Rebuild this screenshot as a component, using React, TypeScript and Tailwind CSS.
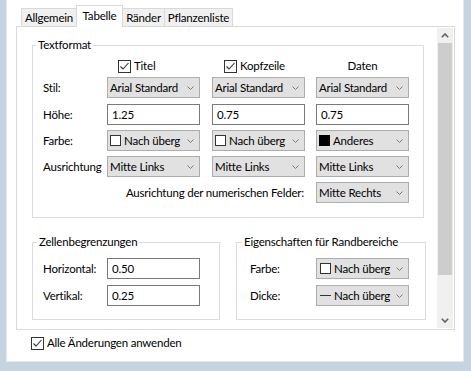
import React from "react";

function Chev() {
  return (
    <svg width="7" height="4" viewBox="0 0 7 4" className="shrink-0">
      <polyline points="0.5,0.5 3.5,3.5 6.5,0.5" fill="none" stroke="#7a7a7a" strokeWidth="1" />
    </svg>
  );
}

function Drop({ children }: { children: React.ReactNode }) {
  return (
    <div className="w-[93px] h-[21px] shrink-0 bg-[#e1e1e1] border border-[#adadad] flex items-center pl-[2px] pr-[5px]">
      <div className="flex-1 flex items-center gap-[3px] overflow-hidden whitespace-nowrap">{children}</div>
      <Chev />
    </div>
  );
}

function Field({ v }: { v: string }) {
  return (
    <div className="w-[93px] h-[21px] shrink-0 bg-white border border-[#7a7a7a] flex items-center pl-[4px]">{v}</div>
  );
}

function Swatch({ filled }: { filled?: boolean }) {
  return (
    <span
      className={
        filled
          ? "w-[11px] h-[11px] shrink-0 border border-black bg-black"
          : "w-[11px] h-[11px] shrink-0 border border-[#333333] bg-white"
      }
    />
  );
}

function Check({ label }: { label: string }) {
  return (
    <div className="flex items-center gap-[3px] h-[16px] whitespace-nowrap">
      <span className="w-[13px] h-[13px] border border-[#333333] bg-white flex items-center justify-center shrink-0">
        <svg width="11" height="11" viewBox="0 0 11 11">
          <polyline points="1.5,5.5 4,8 9.5,2" fill="none" stroke="#333333" strokeWidth="1.1" />
        </svg>
      </span>
      <span>{label}</span>
    </div>
  );
}

function ScrollArrow({ up }: { up?: boolean }) {
  return (
    <svg width="8" height="5" viewBox="0 0 8 5">
      <polyline
        points={up ? "0.8,4.2 4,1 7.2,4.2" : "0.8,0.8 4,4 7.2,0.8"}
        fill="none"
        stroke="#606060"
        strokeWidth="1.6"
      />
    </svg>
  );
}

export default function App() {
  return (
    <div className="w-[471px] h-[371px] bg-[#c6d3e1] pl-[6px] pr-[7px] pb-[9px] font-['Lato',sans-serif] text-[11.5px] tracking-[-0.2px] leading-[16px] text-black">
      <div className="h-full bg-white border-l border-r border-b border-[#e2e9f1] pl-[9px] pt-[5px]">
        {/* tabs */}
        <div className="h-[21px] flex items-end pl-[5px]">
          <div className="h-[18px] w-[55px] bg-[#f0f0f0] border-t border-l border-[#d9d9d9] flex items-center justify-center">
            Allgemein
          </div>
          <div className="relative z-10 h-[22px] w-[47px] -mb-px bg-white border-t border-l border-r border-[#d9d9d9] flex items-start justify-center pt-[2px]">
            Tabelle
          </div>
          <div className="h-[18px] w-[41px] bg-[#f0f0f0] border-t border-[#d9d9d9] flex items-center justify-center">
            Ränder
          </div>
          <div className="h-[18px] w-[69px] bg-[#f0f0f0] border-t border-l border-r border-[#d9d9d9] flex items-center justify-center">
            Pflanzenliste
          </div>
        </div>

        {/* panel */}
        <div className="w-[439px] h-[304px] border border-[#d9d9d9] p-px flex">
          <div className="flex-1 overflow-hidden">
            <fieldset className="ml-[14px] mt-[9px] w-[392px] border border-[#dcdcdc]">
              <legend className="ml-[3px] px-[2px]">Textformat</legend>
              <div className="pl-[10px] pt-[5px] pb-[14px]">
                <div className="flex items-center h-[16px]">
                  <div className="w-[64px] shrink-0" />
                  <div className="w-[93px] shrink-0 pl-[11px]">
                    <Check label="Titel" />
                  </div>
                  <div className="w-[93px] shrink-0 ml-[12px] pl-[12px]">
                    <Check label="Kopfzeile" />
                  </div>
                  <div className="w-[93px] shrink-0 ml-[11px] text-center">Daten</div>
                </div>
                <div className="flex items-center mt-[3px]">
                  <div className="w-[64px] shrink-0">Stil:</div>
                  <Drop>Arial Standard</Drop>
                  <div className="ml-[12px]">
                    <Drop>Arial Standard</Drop>
                  </div>
                  <div className="ml-[11px]">
                    <Drop>Arial Standard</Drop>
                  </div>
                </div>
                <div className="flex items-center mt-[6px]">
                  <div className="w-[64px] shrink-0">Höhe:</div>
                  <Field v="1.25" />
                  <div className="ml-[12px]">
                    <Field v="0.75" />
                  </div>
                  <div className="ml-[11px]">
                    <Field v="0.75" />
                  </div>
                </div>
                <div className="flex items-center mt-[5px]">
                  <div className="w-[64px] shrink-0">Farbe:</div>
                  <Drop>
                    <Swatch />
                    <span>Nach überg</span>
                  </Drop>
                  <div className="ml-[12px]">
                    <Drop>
                      <Swatch />
                      <span>Nach überg</span>
                    </Drop>
                  </div>
                  <div className="ml-[11px]">
                    <Drop>
                      <Swatch filled />
                      <span>Anderes</span>
                    </Drop>
                  </div>
                </div>
                <div className="flex items-center mt-[5px]">
                  <div className="w-[64px] shrink-0 whitespace-nowrap">Ausrichtung</div>
                  <Drop>Mitte Links</Drop>
                  <div className="ml-[12px]">
                    <Drop>Mitte Links</Drop>
                  </div>
                  <div className="ml-[11px]">
                    <Drop>Mitte Links</Drop>
                  </div>
                </div>
                <div className="flex items-center mt-[5px] w-[366px]">
                  <div className="flex-1 text-right pr-[12px] whitespace-nowrap">
                    Ausrichtung der numerischen Felder:
                  </div>
                  <Drop>Mitte Rechts</Drop>
                </div>
              </div>
            </fieldset>

            <div className="flex items-start mt-[16px] ml-[14px] gap-[16px]">
              <fieldset className="w-[188px] border border-[#dcdcdc]">
                <legend className="ml-[4px] px-[2px]">Zellenbegrenzungen</legend>
                <div className="pl-[10px] pt-[8px] pb-[13px]">
                  <div className="flex items-center">
                    <div className="w-[64px] shrink-0">Horizontal:</div>
                    <Field v="0.50" />
                  </div>
                  <div className="flex items-center mt-[6px]">
                    <div className="w-[64px] shrink-0">Vertikal:</div>
                    <Field v="0.25" />
                  </div>
                </div>
              </fieldset>
              <fieldset className="w-[190px] border border-[#dcdcdc]">
                <legend className="ml-[5px] px-[2px]">Eigenschaften für Randbereiche</legend>
                <div className="pl-[13px] pt-[8px] pb-[13px]">
                  <div className="flex items-center">
                    <div className="w-[66px] shrink-0">Farbe:</div>
                    <Drop>
                      <span className="ml-[1px] w-[11px] h-[11px] shrink-0 border border-[#333333] bg-white" />
                      <span>Nach überg</span>
                    </Drop>
                  </div>
                  <div className="flex items-center mt-[6px]">
                    <div className="w-[66px] shrink-0">Dicke:</div>
                    <Drop>
                      <span className="ml-[1px] w-[11px] h-px bg-[#333333] shrink-0" />
                      <span>Nach überg</span>
                    </Drop>
                  </div>
                </div>
              </fieldset>
            </div>
          </div>

          {/* scrollbar */}
          <div className="w-[16px] h-full bg-[#f0f0f0] flex flex-col items-center shrink-0">
            <div className="h-[15px] w-full flex items-center justify-center">
              <ScrollArrow up />
            </div>
            <div className="w-[14px] h-[232px] bg-[#cdcdcd]" />
            <div className="flex-1" />
            <div className="h-[15px] w-full flex items-center justify-center">
              <ScrollArrow />
            </div>
          </div>
        </div>

        {/* bottom checkbox */}
        <div className="mt-[5px] ml-[15px]">
          <Check label="Alle Änderungen anwenden" />
        </div>
      </div>
    </div>
  );
}
